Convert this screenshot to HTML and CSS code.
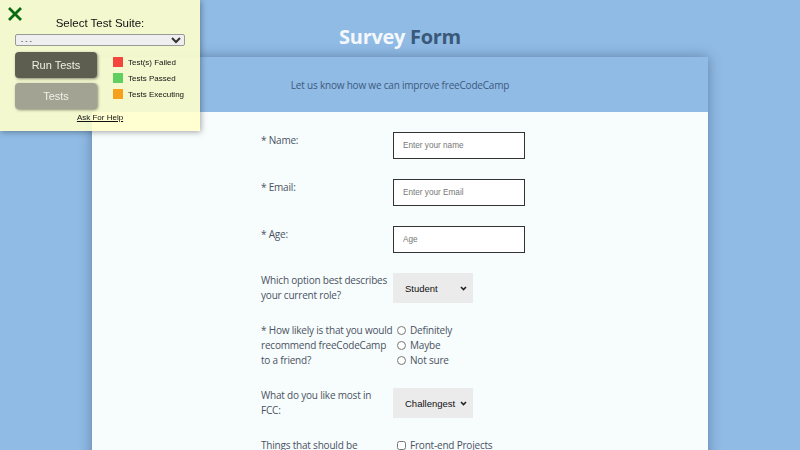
FILE: index.html
```html
<!DOCTYPE html>
<html lang="en">
<head>
<meta charset="utf-8">
<title>Survey Form</title>
<link rel="stylesheet" href="styles.css">
</head>
<body>
<div class="tests-panel">
  <svg class="close-x" width="14" height="14" viewBox="0 0 14 14"><path d="M2 2 L12 12 M12 2 L2 12" stroke="#0b6b12" stroke-width="2.8" stroke-linecap="square"/></svg>
  <div class="suite-title">Select Test Suite:</div>
  <select class="suite-select"><option>- - -</option></select>
  <div class="tests-main">
    <div class="tests-buttons">
      <button class="btn btn-run">Run Tests</button>
      <button class="btn btn-tests">Tests</button>
    </div>
    <ul class="legend">
      <li><span class="sq sq-red"></span>Test(s) Failed</li>
      <li><span class="sq sq-green"></span>Tests Passed</li>
      <li><span class="sq sq-orange"></span>Tests Executing</li>
    </ul>
  </div>
  <a class="help" href="#">Ask For Help</a>
</div>

<header class="page-header">
  <h1 id="title"><span class="t-light">Survey</span> <span class="t-dark">Form</span></h1>
</header>

<main class="card">
  <div class="card-head">
    <p id="description">Let us know how we can improve freeCodeCamp</p>
  </div>
  <form class="card-body" id="survey-form">
    <div class="row">
      <label class="lbl lbl-single" for="name">* Name:</label>
      <input class="field" id="name" type="text" placeholder="Enter your name">
    </div>
    <div class="row">
      <label class="lbl lbl-single" for="email">* Email:</label>
      <input class="field" id="email" type="email" placeholder="Enter your Email">
    </div>
    <div class="row">
      <label class="lbl lbl-single" for="number">* Age:</label>
      <input class="field" id="number" type="number" placeholder="Age">
    </div>
    <div class="row">
      <label class="lbl" for="dropdown">Which option best describes your current role?</label>
      <div class="drop-wrap">
        <select class="drop" id="dropdown"><option>Student</option></select>
        <svg class="chev" width="7" height="5" viewBox="0 0 7 5"><path d="M1 1 L3.5 3.5 L6 1" fill="none" stroke="#222" stroke-width="1.6"/></svg>
      </div>
    </div>
    <div class="row">
      <div class="lbl">* How likely is that you would recommend freeCodeCamp to a friend?</div>
      <div class="choices">
        <label class="choice"><input type="radio" name="rec">Definitely</label>
        <label class="choice"><input type="radio" name="rec">Maybe</label>
        <label class="choice"><input type="radio" name="rec">Not sure</label>
      </div>
    </div>
    <div class="row">
      <label class="lbl" for="like">What do you like most in FCC:</label>
      <div class="drop-wrap">
        <select class="drop" id="like"><option>Challengest</option></select>
        <svg class="chev" width="7" height="5" viewBox="0 0 7 5"><path d="M1 1 L3.5 3.5 L6 1" fill="none" stroke="#222" stroke-width="1.6"/></svg>
      </div>
    </div>
    <div class="row">
      <div class="lbl">Things that should be improved in the future</div>
      <div class="choices">
        <label class="choice"><input type="checkbox">Front-end Projects</label>
        <label class="choice"><input type="checkbox">Back-end Projects</label>
      </div>
    </div>
  </form>
</main>
</body>
</html>
```
FILE: styles.css
```css
* { box-sizing: border-box; }
html, body { margin: 0; padding: 0; }
body {
  background: #90bbe5;
  font-family: "Open Sans", "Noto Sans", sans-serif;
  color: #4a5060;
}

/* test panel overlay */
.tests-panel {
  position: fixed;
  top: 0;
  left: 0;
  width: 200px;
  height: 131px;
  background: rgba(255, 255, 204, 0.9);
  box-shadow: 1px 1px 6px rgba(0, 0, 0, 0.35);
  font-family: "Liberation Sans", Arial, sans-serif;
  color: #111;
  z-index: 10;
  padding: 0 15px;
  display: flex;
  flex-direction: column;
}
.close-x {
  position: absolute;
  top: 7px;
  left: 8px;
}
.suite-title {
  margin-top: 16px;
  text-align: center;
  font-size: 11.5px;
  line-height: 14px;
}
.suite-select {
  margin-top: 4px;
  width: 170px;
  height: 12px;
  font-size: 7px;
  padding: 0 1px;
  border: 1px solid #999;
  border-radius: 2px;
  background: #efefef;
  color: #333;
}
.tests-main {
  display: flex;
  margin-top: 6px;
}
.tests-buttons {
  display: flex;
  flex-direction: column;
  gap: 5px;
  flex: none;
}
.btn {
  width: 82px;
  height: 26px;
  border: none;
  border-radius: 4px;
  font-family: "Liberation Sans", Arial, sans-serif;
  font-size: 11px;
  box-shadow: 1px 1px 3px rgba(0, 0, 0, 0.45);
  padding: 0;
}
.btn-run { background: #5e5e50; color: #eeeee4; }
.btn-tests { background: #a3a394; color: #f0f0e6; }
.legend {
  list-style: none;
  margin: 2px 0 0 16px;
  padding: 0;
  font-size: 8px;
  white-space: nowrap;
}
.legend li {
  display: flex;
  align-items: center;
  height: 16px;
}
.sq {
  width: 10px;
  height: 10px;
  margin-right: 5px;
  flex: none;
}
.sq-red { background: #f4463c; }
.sq-green { background: #5fd060; }
.sq-orange { background: #f7a01c; }
.help {
  align-self: center;
  margin-top: 4px;
  font-size: 8px;
  color: #111;
  text-decoration: underline;
}

/* page */
.page-header {
  padding: 24px 0 7px;
  text-align: center;
}
.page-header h1 {
  margin: 0;
  font-size: 20px;
  line-height: 26px;
  font-weight: 700;
  letter-spacing: -0.3px;
}
.t-light { color: #f4f8fc; }
.t-dark { color: #3a5878; }

.card {
  width: 616px;
  margin: 0 auto;
  box-shadow: 0 0 12px rgba(40, 60, 90, 0.45);
}
.card-head {
  height: 55px;
  display: flex;
  align-items: center;
  justify-content: center;
}
#description {
  margin: 0;
  font-size: 10px;
  letter-spacing: -0.2px;
  color: #3d5a80;
}
.card-body {
  background: #f7fcfc;
  padding: 20px 0 40px;
}
.row {
  width: 278px;
  margin: 0 auto 20px;
  display: grid;
  grid-template-columns: 132px 1fr;
  align-items: start;
}
.lbl {
  font-size: 10px;
  letter-spacing: -0.2px;
  line-height: 15px;
  color: #4a5263;
}
.lbl-single { padding-top: 1px; }
.field {
  width: 132px;
  height: 27px;
  border: 1px solid #333;
  background: #fff;
  padding: 0 9px;
  font-family: "Liberation Sans", Arial, sans-serif;
  font-size: 8.2px;
  color: #333;
}
.field::placeholder { color: #777; }
.drop-wrap {
  position: relative;
  width: 80px;
  height: 30px;
}
.drop {
  appearance: none;
  -webkit-appearance: none;
  width: 80px;
  height: 30px;
  border: none;
  border-radius: 0;
  background: #ebebeb;
  font-family: "Liberation Sans", Arial, sans-serif;
  font-size: 9.5px;
  color: #111;
  padding: 0 14px 0 12px;
}
.chev {
  position: absolute;
  right: 6px;
  top: 13px;
  pointer-events: none;
}
.choices {
  display: flex;
  flex-direction: column;
  padding-left: 3px;
}
.choice {
  display: flex;
  align-items: center;
  font-size: 10px;
  letter-spacing: -0.2px;
  line-height: 15px;
  color: #4a5263;
}
.choice input {
  width: 9px;
  height: 9px;
  margin: 0 4px 0 1px;
}
```
